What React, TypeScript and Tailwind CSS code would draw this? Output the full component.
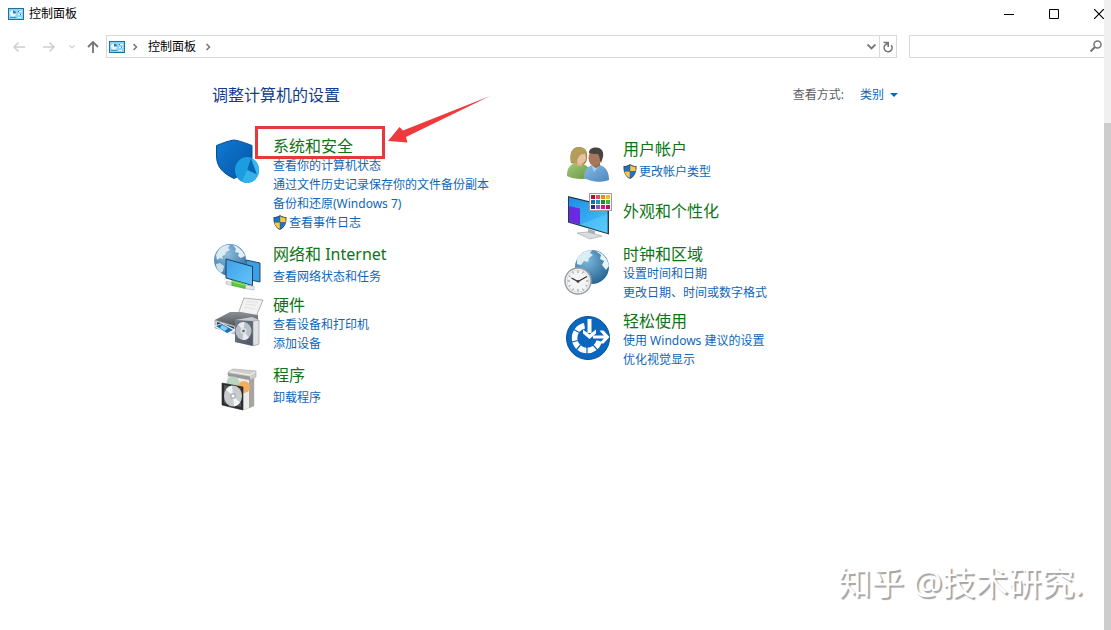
import React from "react";

interface Task {
  label: string;
  shield?: boolean;
}

interface Category {
  title: string;
  icon: React.ReactNode;
  tasks: Task[];
  space: string;
  textClass?: string;
  highlighted?: boolean;
}

const PanelIcon = () => (
  <svg width="16" height="12" viewBox="0 0 16 12" className="shrink-0">
    <rect width="16" height="12" fill="#1f6f9f" />
    <rect x="1" y="1" width="14" height="10" fill="#8fd3f5" />
    <circle cx="5" cy="5.5" r="3" fill="#e8f7fe" />
    <path d="M5 5.5V2.5A3 3 0 0 1 8 5.5Z" fill="#2b7fb5" />
    <path d="M10 3.500h4M10 6.500h4M10 9.500h3" stroke="#fff" />
    <path d="M10 3.500h1M12 6.500h1" stroke="#2274ad" />
    <path d="M2 9.500h6" stroke="#3f97c8" />
  </svg>
);

const UacShield = () => (
  <svg width="14" height="15" viewBox="0 0 14 15" className="shrink-0">
    <path d="M7 0C5 1.5 3 2 .5 2C.2 8 2 12.500 7 15C12 12.500 13.800 8 13.500 2C11 2 9 1.500 7 0Z" fill="#3b4a59" />
    <path d="M6.800 1.200C5 2.400 3.500 2.800 1.400 2.900V7.200H6.800Z" fill="#1b74c4" />
    <path d="M7.200 1.200C9 2.400 10.500 2.800 12.600 2.900V7.200H7.200Z" fill="#fbc646" />
    <path d="M6.800 7.600H1.500C2 10.500 3.500 12.500 6.800 14Z" fill="#fbc646" />
    <path d="M7.200 7.600H12.500C12 10.500 10.500 12.500 7.200 14Z" fill="#1b74c4" />
  </svg>
);

const Icon = ({ children }: { children: React.ReactNode }) => (
  <svg
    width="48"
    height="48"
    viewBox="0 0 48 48"
    aria-hidden="true"
    className="shrink-0 overflow-visible">
    {children}
  </svg>
);

const SecurityIcon = () => (
  <Icon>
    <defs>
      <linearGradient id="shield" x1="0" y1="0" x2="1" y2="1">
        <stop offset="0" stopColor="#0f7ad3" />
        <stop offset="1" stopColor="#0455a5" />
      </linearGradient>
    </defs>
    <path
      d="M22 4C16 5 12 6.500 4.500 9.500V20C4.500 30 10 37 22 42.500C34 37 40 30 40 20V9.500C32 6.500 28 5 22 4Z"
      fill="url(#shield)"
      stroke="#0a4d92"
    />
    <ellipse cx="35" cy="34" rx="12" ry="13" fill="#1a9ee0" />
    <path d="M35 34L40 22.500C44.500 25 47 29 47 34C47 36 46.500 38 46 40Z" fill="#39b8ef" />
    <path d="M35 34L39 22.500L45 38.500Z" fill="#0867b3" />
    <path d="M35 34L46 39.500C42 47 35 48.500 30 45.500Z" fill="#35b2e9" />
  </Icon>
);

const NetworkIcon = () => (
  <Icon>
    <defs>
      <radialGradient id="netGlobe" cx=".4" cy=".3" r=".75">
        <stop offset="0" stopColor="#8fbfdd" />
        <stop offset="1" stopColor="#3474a8" />
      </radialGradient>
      <linearGradient id="netScreen" x1="0" y1="0" x2="1" y2="1">
        <stop offset="0" stopColor="#3f9fe8" />
        <stop offset="1" stopColor="#63c5fa" />
      </linearGradient>
    </defs>
    <circle cx="18" cy="16" r="16" fill="url(#netGlobe)" />
    <path d="M6 7C9 2 13 1 18 1L16 4L18 6L14 8L13 11L10 12L11 15L8 14L5 16L4 11Z" fill="#dcebf3" />
    <path d="M4 20L8 19L12 22L11 27L9 29C6 27 4 24 4 20Z" fill="#c8dfec" />
    <path d="M21 1C27 3 31 7 33 12L29 14L26 12L27 9L23 8L24 5Z" fill="#e3eff5" />
    <path d="M34 16L48 19V38L34 35Z" fill="#3a9fe6" stroke="#214a68" />
    <path d="M14 15L40.500 22.500V41.500L14 34Z" fill="url(#netScreen)" stroke="#1d3f5a" />
    <path d="M14 37.500L20 38.500V41.500L14 40Z" fill="#e6e9ea" stroke="#a5abae" strokeWidth=".6" />
    <path d="M33 41L42 42.500V46L33 44.500Z" fill="#e6e9ea" stroke="#a5abae" strokeWidth=".6" />
    <path d="M20 36L33 39.500V44.500L20 41.500Z" fill="#5cc844" stroke="#389a2c" strokeWidth=".6" />
    <path d="M20 37.500L33 41" stroke="#a5e88a" />
  </Icon>
);

const HardwareIcon = () => (
  <Icon>
    <defs>
      <linearGradient id="printer" x1="0" y1="0" x2="0" y2="1">
        <stop offset="0" stopColor="#8b9094" />
        <stop offset="1" stopColor="#45494d" />
      </linearGradient>
      <linearGradient id="drive" x1="0" y1="0" x2="1" y2="1">
        <stop offset="0" stopColor="#747c89" />
        <stop offset="1" stopColor="#4c5563" />
      </linearGradient>
    </defs>
    <path d="M32 -2L51 0L43 19L26 14Z" fill="#f2f2f2" stroke="#9da0a3" strokeWidth=".8" />
    <path d="M34 1L46 2.500M33 4L44 5.500M32 7L43 9" stroke="#d8dadc" strokeWidth=".7" />
    <path d="M3 20L18 12H29L46 15V22L23 29Z" fill="url(#printer)" />
    <path d="M3 20L23 26V34L3 28Z" fill="#d3d6d9" stroke="#858a8e" strokeWidth=".6" />
    <path d="M5 22L22 27V30L5 25Z" fill="#393e43" />
    <path d="M2 26L10 23L24 30L16 35Z" fill="#eaf5fb" />
    <path d="M4 26L10 24L21 30L15 33Z" fill="#1b6fb8" />
    <path d="M10 25L16 28L13 31L8 28Z" fill="#82cff1" />
    <path d="M23 20L40 17L47 20V44L40 46L23 42Z" fill="#c9cdd1" />
    <path d="M23 20L41 21V46L23 42Z" fill="url(#drive)" />
    <path d="M41 21L47 20V44L41 46Z" fill="#e0e3e5" stroke="#888e93" strokeWidth=".6" />
    <ellipse cx="31.500" cy="31" rx="8" ry="9" fill="#bac1c9" />
    <path d="M31.500 31L26 24.500A8 9 0 0 1 32.500 22ZM31.500 31L37 37.500A8 9 0 0 1 30.500 40Z" fill="#e9ecee" />
    <circle cx="31.500" cy="31" r="3" fill="#dfe3e6" />
    <circle cx="31.500" cy="31" r="1.300" fill="#5c6570" />
  </Icon>
);

const ProgramsIcon = () => (
  <Icon>
    <path d="M16 11L42 13V41L32 45L16 41Z" fill="#ececeb" stroke="#c4c4c3" strokeWidth=".6" />
    <path d="M37 14L42 13V41L37 43Z" fill="#a8a4a2" />
    <path d="M16 7L21 4L44 6V12L38 15L16 10Z" fill="#d0cfce" stroke="#a5a5a5" strokeWidth=".6" />
    <path d="M16 8L38 11.500V15L16 11Z" fill="#9b9998" />
    <path d="M18 6.500L38 10L43 7" stroke="#f6f6f6" fill="none" />
    <circle cx="21" cy="18" r="6.500" fill="#b9d7c0" />
    <circle cx="32" cy="22" r="6" fill="#f2ad5e" />
    <path d="M10 18L31 22V45L10 40Z" fill="#2d2e30" stroke="#222" strokeWidth=".6" />
    <path d="M12 20L29 23.500V42L12 38Z" fill="#55575a" />
    <ellipse cx="21" cy="31" rx="9" ry="10.500" fill="#c9cccf" />
    <path d="M21 31L14 24.500A9 10.500 0 0 1 20 20.500ZM21 31L28 37.500A9 10.500 0 0 1 22 41.500Z" fill="#f4f5f5" />
    <circle cx="21" cy="31" r="3" fill="#aeb2b5" />
    <circle cx="21" cy="31" r="1.500" fill="#fff" />
  </Icon>
);

const UsersIcon = () => (
  <Icon>
    <defs>
      <linearGradient id="green" x1="0" y1="0" x2="1" y2="1">
        <stop offset="0" stopColor="#a5cb7b" />
        <stop offset="1" stopColor="#63963e" />
      </linearGradient>
      <linearGradient id="blue" x1="0" y1="0" x2="1" y2="1">
        <stop offset="0" stopColor="#88bbe5" />
        <stop offset="1" stopColor="#4c86bf" />
      </linearGradient>
    </defs>
    <path d="M9 24C7 14 10 8 17 8C23 8 26 13 25 19C25 24 22 27 17 26Z" fill="#a08a4c" />
    <path d="M13 22H20V29H13Z" fill="#dfb08d" />
    <ellipse cx="19" cy="18.500" rx="5" ry="6.500" fill="#e9c0a2" />
    <path d="M9 23C8 13 11 8 17 8C21 8 25 10 25 15C20 14 15 16 15 25Z" fill="#b39d5b" />
    <path d="M5 37C5 30 7 26 13 24C16 28 19 28 21 25C27 27 29 32 29 39C21 41 10 40 5 37Z" fill="url(#green)" />
    <path d="M30 22H38V30H30Z" fill="#8a5c41" />
    <ellipse cx="33" cy="19" rx="6.500" ry="8.500" fill="#a8765a" />
    <path d="M27 14C27 10 30 8.500 34 8.500C40 8.500 42 13 41 18L39 24C38 22 38 18 36 15C33 15 30 15 27 14Z" fill="#4a4441" />
    <path d="M22 39C22 31 25 28 30 26C33 30 36 30 38 26C44 28 47 33 47 41C39 44 29 43 22 39Z" fill="url(#blue)" />
    <path d="M29 26L32 33L38 26L34 29Z" fill="#a9cdeb" />
  </Icon>
);

const swatches = [
  ["#b3122b", "#e84a6b", "#f08a12", "#f7b733"],
  ["#1170b8", "#2390c8", "#25842d", "#3cb44b"],
  ["#3a2191", "#8c5bb5", "#d3157a", "#b0175e"],
];

const AppearanceIcon = () => (
  <Icon>
    <defs>
      <linearGradient id="screen" x1="0" y1="0" x2="1" y2="1">
        <stop offset="0" stopColor="#1d8ce4" />
        <stop offset="1" stopColor="#49c7fb" />
      </linearGradient>
    </defs>
    <path d="M26 38L33 40V44L26 43Z" fill="#aab1b7" />
    <path d="M15 42L26 41L40 45L28 48Z" fill="#d9dde0" stroke="#9ba2a8" strokeWidth=".6" />
    <path d="M6 5L47 15V43.500L6 31.500Z" fill="#27394a" />
    <path d="M7 6.500L45.500 16V42L7 30.500Z" fill="url(#screen)" />
    <path d="M7 15L18 17.500V33.500L7 30.500Z" fill="#6a2be0" />
    <path d="M18 33.500L45.500 23V42Z" fill="#73d7fd" opacity=".35" />
    <rect x="27.500" y="2.500" width="22" height="17" fill="#fff" stroke="#a9969c" />
    {swatches.map((row, y) =>
      row.map((fill, x) => (
        <rect key={fill} x={29 + x * 5} y={4 + y * 5} width="4" height="4" fill={fill} />
      )),
    )}
  </Icon>
);

const ClockIcon = () => (
  <Icon>
    <defs>
      <radialGradient id="clockGlobe" cx=".35" cy=".3" r=".8">
        <stop offset="0" stopColor="#7db8dc" />
        <stop offset="1" stopColor="#215f8e" />
      </radialGradient>
    </defs>
    <circle cx="30" cy="18" r="17" fill="url(#clockGlobe)" />
    <path d="M15 10C18 4 24 1 30 1L28 4L31 6L27 9L26 13L22 12L19 16L15 15Z" fill="#dcedf4" />
    <path d="M34 2C41 4 46 10 47 17L44 21L40 16L42 12L38 10L39 6Z" fill="#e7f3f7" />
    <circle cx="16" cy="32" r="13" fill="#f4f5f6" stroke="#9c9fa3" strokeWidth="1.500" />
    <circle cx="16" cy="32" r="11" fill="none" stroke="#d3d6d9" strokeWidth=".8" />
    <path d="M16 21.500V24M16 40V42.500M5.500 32H8M24 32H26.500M10.500 22.500L11.500 24.500M21.500 22.500L20.500 24.500M10.500 41.500L11.500 39.500M21.500 41.500L20.500 39.500M6.800 26.800L8.500 27.800M25.200 37.200L23.500 36.200M6.800 37.200L8.500 36.200" stroke="#777" strokeWidth=".8" />
    <path d="M9.500 29L16 32.500L25 27.500" fill="none" stroke="#333" strokeWidth="1.300" />
    <circle cx="16" cy="32.500" r="1.300" fill="#333" />
  </Icon>
);

const EaseIcon = () => (
  <Icon>
    <circle cx="26" cy="22" r="21.500" fill="#0b66bd" stroke="#0a4f96" />
    <path d="M22.500 9.800A12.500 12.500 0 1 0 37.200 25" fill="none" stroke="#fff" strokeWidth="5.500" />
    <path d="M25 30V38M18.500 29L13 35.500M18 24L8 26.500M20 18L10 12.500M31 29L36.500 35" stroke="#0b66bd" strokeWidth="1.200" />
    <path d="M27.500 3V17" stroke="#fff" strokeWidth="4" />
    <path d="M21 13.500V17.500L27.500 23L34 17.500V13.500L27.500 18.500Z" fill="#fff" />
    <path d="M31 21H43" stroke="#fff" strokeWidth="3" />
    <path d="M37.500 14.500H41.500L47.500 21L41.500 27.500H37.500L43 21Z" fill="#fff" />
  </Icon>
);

const leftCategories: Category[] = [
  {
    title: "系统和安全",
    icon: <SecurityIcon />,
    space: "items-start",
    highlighted: true,
    tasks: [
      { label: "查看你的计算机状态" },
      { label: "通过文件历史记录保存你的文件备份副本" },
      { label: "备份和还原(Windows 7)" },
      { label: "查看事件日志", shield: true },
    ],
  },
  {
    title: "网络和 Internet",
    icon: <NetworkIcon />,
    space: "mt-3 items-start",
    textClass: "gap-[3px]",
    tasks: [{ label: "查看网络状态和任务" }],
  },
  {
    title: "硬件",
    icon: <HardwareIcon />,
    space: "mt-[3px] items-center",
    tasks: [{ label: "查看设备和打印机" }, { label: "添加设备" }],
  },
  {
    title: "程序",
    icon: <ProgramsIcon />,
    space: "mt-3 items-start",
    textClass: "gap-[3px]",
    tasks: [{ label: "卸载程序" }],
  },
];

const rightCategories: Category[] = [
  {
    title: "用户帐户",
    icon: <UsersIcon />,
    space: "items-start",
    textClass: "gap-[3px]",
    tasks: [{ label: "更改帐户类型", shield: true }],
  },
  {
    title: "外观和个性化",
    icon: <AppearanceIcon />,
    space: "mt-1 items-start",
    textClass: "pt-[10px]",
    tasks: [],
  },
  {
    title: "时钟和区域",
    icon: <ClockIcon />,
    space: "mt-[5px] items-center",
    tasks: [{ label: "设置时间和日期" }, { label: "更改日期、时间或数字格式" }],
  },
  {
    title: "轻松使用",
    icon: <EaseIcon />,
    space: "mt-[9px] items-center",
    tasks: [{ label: "使用 Windows 建议的设置" }, { label: "优化视觉显示" }],
  },
];

const CategoryRow = ({ category }: { category: Category }) => (
  <section className={`relative flex gap-[13px] ${category.space}`}>
    {category.icon}
    <div className={`flex flex-col items-start ${category.textClass ?? ""}`}>
      <h2 className="text-base leading-5 whitespace-nowrap">
        <a href="#" className="text-[#0f7416]">
          {category.title}
        </a>
      </h2>
      {category.tasks.length > 0 && (
        <ul>
          {category.tasks.map((task) => (
            <li key={task.label} className="h-[19px] text-xs leading-[19px] whitespace-nowrap">
              <a href="#" className="flex items-center gap-0.5 text-[#0f66b8]">
                {task.shield && <UacShield />}
                {task.label}
              </a>
            </li>
          ))}
        </ul>
      )}
    </div>
    {category.highlighted && (
      <>
        <div className="absolute -top-[10px] left-[43px] h-[33px] w-[130px] border-3 border-[#e43a3d]" />
        <svg
          width="104"
          height="48"
          viewBox="0 0 104 48"
          className="absolute -top-10 left-44">
          <path d="M0 45L11.500 31L15 34.500L102 0L18 41L19.500 46.500Z" fill="#ee3a3c" />
        </svg>
      </>
    )}
  </section>
);

export default function App() {
  return (
    <div className="relative flex min-h-screen overflow-hidden bg-white font-['Noto_Sans','Noto_Sans_CJK_SC',sans-serif] text-black">
      <div className="min-w-0 flex-1 overflow-hidden">
        {/* Title bar */}
        <header className="flex h-7 items-center justify-between pl-2">
          <div className="flex items-center gap-[5px] text-xs">
            <PanelIcon />
            控制面板
          </div>
          <div className="flex items-center gap-[35px]">
            <button aria-label="最小化">
              <svg width="10" height="10" viewBox="0 0 10 10" className="block">
                <path d="M0 5.500h10" stroke="#000" />
              </svg>
            </button>
            <button aria-label="最大化">
              <svg width="10" height="10" viewBox="0 0 10 10" className="block">
                <path d="M.5.5h9v9h-9z" fill="none" stroke="#000" />
              </svg>
            </button>
            <button aria-label="关闭">
              <svg width="10" height="10" viewBox="0 0 10 10" className="block">
                <path d="M0 0l10 10M10 0L0 10" stroke="#000" strokeWidth="1.200" />
              </svg>
            </button>
          </div>
        </header>

        {/* Navigation */}
        <nav className="mt-[7px] flex items-center">
          <div className="flex w-[106px] shrink-0 items-center pl-[13px]">
            <button aria-label="后退" className="mr-[18px]">
              <svg width="12" height="12" viewBox="0 0 12 12" fill="none" stroke="#cfcfcf" strokeWidth="1.500" className="block">
                <path d="M12 6H1M5.500 1.500L1 6l4.500 4.500" />
              </svg>
            </button>
            <button aria-label="前进" className="mr-[14px]">
              <svg width="12" height="12" viewBox="0 0 12 12" fill="none" stroke="#cfcfcf" strokeWidth="1.500" className="block">
                <path d="M0 6h11M6.500 1.500L11 6l-4.500 4.500" />
              </svg>
            </button>
            <button aria-label="最近浏览的位置" className="mr-3">
              <svg width="6" height="6" viewBox="0 0 6 6" fill="none" stroke="#cfcfcf" strokeWidth="1.200" className="block">
                <path d="M.5 1.500L3 4l2.500-2.500" />
              </svg>
            </button>
            <button aria-label="向上">
              <svg width="12" height="12" viewBox="0 0 12 12" fill="none" stroke="#757575" strokeWidth="1.800" className="block">
                <path d="M6 12V1M1 6l5-5 5 5" />
              </svg>
            </button>
          </div>
          <div className="flex h-[23px] flex-1 items-center border border-[#d9d9d9] pl-0.5 text-xs">
            <PanelIcon />
            <svg width="5" height="8" viewBox="0 0 5 8" fill="none" stroke="#757575" strokeWidth="1.500" className="ml-2">
              <path d="M.5 1L3.500 4 .5 7" />
            </svg>
            <a href="#" className="mx-[10px]">
              控制面板
            </a>
            <svg width="5" height="8" viewBox="0 0 5 8" fill="none" stroke="#757575" strokeWidth="1.500">
              <path d="M.5 1L3.500 4 .5 7" />
            </svg>
            <button aria-label="以前的位置" className="mr-[3px] ml-auto">
              <svg width="9" height="6" viewBox="0 0 9 6" fill="none" stroke="#757575" strokeWidth="1.800" className="block">
                <path d="M.5.5l4 4 4-4" />
              </svg>
            </button>
            <button aria-label="刷新" className="flex h-full w-[17px] items-center justify-center border-l border-[#d9d9d9]">
              <svg width="10" height="12" viewBox="0 0 10 12" fill="none" stroke="#757575" strokeWidth="1.600">
                <path d="M8.200 4.200A4 4 0 1 1 2.200 4L4.800 2" />
                <path d="M.5 1.500H5.200V6" />
              </svg>
            </button>
          </div>
          <div className="relative ml-3 w-[195px] shrink-0">
            <input
              type="search"
              aria-label="搜索控制面板"
              className="block h-[23px] w-full border border-r-0 border-[#d9d9d9] px-2 text-xs outline-none"
            />
            <svg width="12" height="12" viewBox="0 0 12 12" fill="none" stroke="#757575" className="absolute top-[5px] right-0.5">
              <circle cx="7.500" cy="4.500" r="3.500" strokeWidth="1.500" />
              <path d="M5 7L.5 11.500" strokeWidth="2" />
            </svg>
          </div>
        </nav>

        {/* Categories */}
        <main className="pt-[25px] pr-[204px] pl-[212px]">
          <div className="flex items-center justify-between">
            <h1 className="text-base leading-6 text-[#123c8c]">调整计算机的设置</h1>
            <div className="flex items-center text-xs leading-6">
              <label htmlFor="view" className="text-[#5c6066]">
                查看方式:
              </label>
              <div className="relative ml-4 flex items-center">
                <select
                  id="view"
                  className="w-10 appearance-none bg-transparent text-[#0f66b8] outline-none">
                  <option>类别</option>
                </select>
                <svg width="8" height="4" viewBox="0 0 8 4" className="pointer-events-none absolute right-0.5">
                  <path d="M0 0h8L4 4z" fill="#0f66b8" />
                </svg>
              </div>
            </div>
          </div>
          <div className="mt-[29px] grid grid-cols-2 gap-3">
            <div>
              {leftCategories.map((category) => (
                <CategoryRow key={category.title} category={category} />
              ))}
            </div>
            <div className="pt-[3px]">
              {rightCategories.map((category) => (
                <CategoryRow key={category.title} category={category} />
              ))}
            </div>
          </div>
        </main>
      </div>

      {/* Scrollbar */}
      <div className="flex w-[7px] shrink-0 flex-col bg-[#f0f0f0] pt-[123px]">
        <div className="flex-1 bg-[#cdcdcd]" />
      </div>

      <p className="absolute right-7 bottom-6 text-[33px] leading-[46px] text-white [text-shadow:2px_2px_1px_#a3a3a3]">
        知乎 @技术研究.
      </p>
    </div>
  );
}
